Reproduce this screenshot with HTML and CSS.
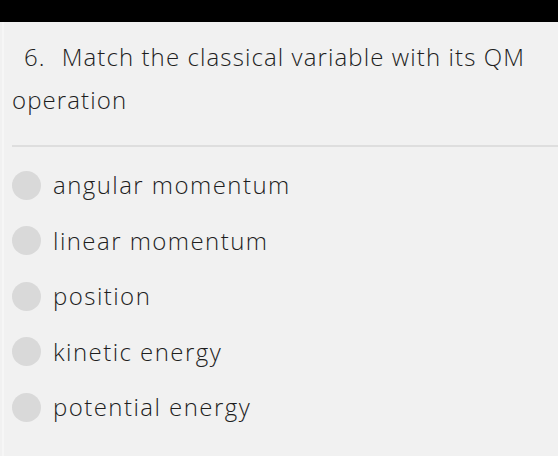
FILE: index.html
```html
<!DOCTYPE html>
<html>
<head>
<meta charset="utf-8">
<link rel="stylesheet" href="styles.css">
</head>
<body>
<div class="topbar"></div>
<main class="card">
  <p class="question"><span class="num">6.</span>Match the classical variable with its QM operation</p>
  <hr class="sep">
  <ul class="options">
    <li class="option"><span class="radio"></span><span class="label">angular momentum</span></li>
    <li class="option"><span class="radio"></span><span class="label">linear momentum</span></li>
    <li class="option"><span class="radio"></span><span class="label">position</span></li>
    <li class="option"><span class="radio"></span><span class="label">kinetic energy</span></li>
    <li class="option"><span class="radio"></span><span class="label">potential energy</span></li>
  </ul>
</main>
</body>
</html>
```
FILE: styles.css
```css
html, body {
  margin: 0;
  padding: 0;
  background: #f1f1f1;
}
body {
  font-family: "Open Sans", "Lato", sans-serif;
  font-weight: 350;
  color: #1e1e1e;
  width: 558px;
  height: 456px;
  overflow: hidden;
}
.topbar {
  height: 22px;
  background: #000;
}
.card {
  display: block;
  margin-left: 2px;
  border-left: 2px solid #f6f6f6;
  padding-left: 8px;
  height: 434px;
  box-sizing: border-box;
}
.question {
  margin: 0;
  padding-top: 13px;
  font-size: 24px;
  letter-spacing: 1.1px;
  line-height: 43px;
  text-indent: 12px;
  padding-right: 12px;
}
.num {
  margin-right: 16px;
}
.sep {
  margin: 24px 0 0 0;
  border: 0;
  height: 2px;
  background: #dedede;
}
.options {
  list-style: none;
  margin: 0;
  padding: 23px 0 0 0;
  display: flex;
  flex-direction: column;
  gap: 25.5px;
}
.option {
  display: flex;
  align-items: center;
  gap: 12px;
  height: 30px;
}
.radio {
  width: 29px;
  height: 29px;
  border-radius: 50%;
  background: #d9d9d9;
  flex: none;
}
.label {
  font-size: 24px;
  letter-spacing: 1.45px;
  line-height: 30px;
}
```
